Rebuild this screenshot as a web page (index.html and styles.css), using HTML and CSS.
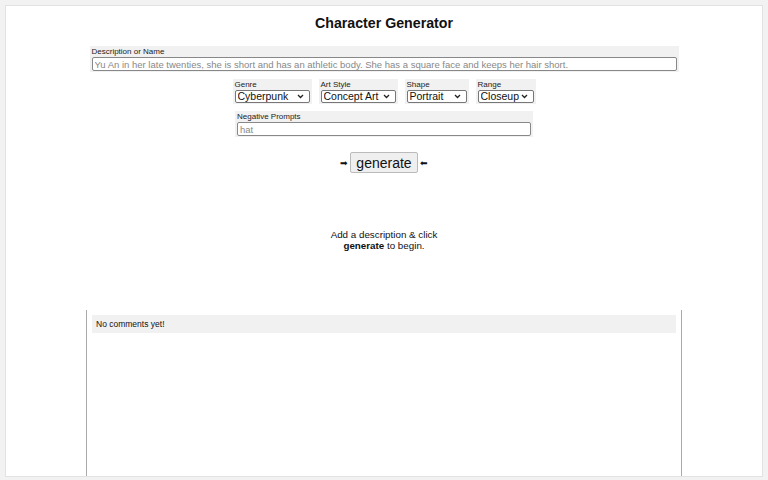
FILE: index.html
```html
<!DOCTYPE html>
<html lang="en">
<head>
  <meta charset="UTF-8">
  <meta name="viewport" content="width=device-width, initial-scale=1.0">
  <title>Character Generator</title>
  <link rel="stylesheet" href="styles.css">
</head>
<body>
  <div class="panel">
    <h1>Character Generator</h1>

    <div class="field field-wide">
      <label for="description">Description or Name</label>
      <input type="text" id="description" placeholder="Yu An in her late twenties, she is short and has an athletic body. She has a square face and keeps her hair short." />
    </div>

    <div class="options">
      <div class="field">
        <label for="genre">Genre</label>
        <select id="genre" class="sel-genre">
          <option>Cyberpunk</option>
        </select>
      </div>
      <div class="field">
        <label for="art-style">Art Style</label>
        <select id="art-style" class="sel-style">
          <option>Concept Art</option>
        </select>
      </div>
      <div class="field">
        <label for="shape">Shape</label>
        <select id="shape" class="sel-shape">
          <option>Portrait</option>
        </select>
      </div>
      <div class="field">
        <label for="range">Range</label>
        <select id="range" class="sel-range">
          <option>Closeup</option>
        </select>
      </div>
    </div>

    <div class="field field-negative">
      <label for="negative">Negative Prompts</label>
      <input type="text" id="negative" placeholder="hat" />
    </div>

    <div class="generate-row">
      <span class="arrow">&#10145;</span>
      <button id="generate-btn">generate</button>
      <span class="arrow">&#11013;</span>
    </div>

    <p class="hint">Add a description &amp; click<br><b>generate</b> to begin.</p>

    <div class="comments">
      <div class="comment-empty">No comments yet!</div>
    </div>
  </div>
</body>
</html>
```

FILE: styles.css
```css
html, body {
  margin: 0;
  height: 100%;
  overflow: hidden;
}
body {
  font-family: "Liberation Sans", Arial, sans-serif;
  background-color: #f2f2f2;
  color: #111;
}
.panel {
  margin: 5px 5px 0 5px;
  height: 472px;
  background-color: #fff;
  border: 1px solid #e2e2e2;
  box-sizing: border-box;
  display: flex;
  flex-direction: column;
  align-items: center;
}
h1 {
  font-size: 14.2px;
  margin: 8px 0 14px 0;
  line-height: 18px;
}
.field {
  background-color: #f1f1f1;
  padding: 1px 2px 1px 2px;
  display: flex;
  flex-direction: column;
}
.field label {
  font-size: 8px;
  line-height: 10px;
  color: #222;
}
.field input {
  font-family: inherit;
  font-size: 9.5px;
  height: 14px;
  padding: 0 2px;
  border: 1px solid #888;
  border-radius: 2px;
  box-sizing: border-box;
  outline: none;
}
.field input::placeholder {
  color: #888;
}
.field-wide {
  width: 589px;
  box-sizing: border-box;
}
.options {
  display: flex;
  gap: 7px;
  margin-top: 7px;
}
.field select {
  appearance: none;
  -webkit-appearance: none;
  font-family: inherit;
  font-size: 10.5px;
  line-height: 11px;
  height: 13px;
  padding: 0 0 0 2px;
  border: 1px solid #777;
  border-radius: 2px;
  background-color: #fff;
  background-image: url("data:image/svg+xml,%3Csvg xmlns='http://www.w3.org/2000/svg' width='7' height='5' viewBox='0 0 7 5'%3E%3Cpath d='M1 1l2.5 2.5L6 1' fill='none' stroke='%23222' stroke-width='1.3'/%3E%3C/svg%3E");
  background-repeat: no-repeat;
  background-position: right 5px center;
  color: #111;
}
.sel-genre { width: 75px; }
.sel-style { width: 75px; }
.sel-shape { width: 60px; }
.sel-range { width: 56px; }
.field-negative {
  width: 298px;
  box-sizing: border-box;
  margin-top: 7px;
}
.generate-row {
  display: flex;
  align-items: center;
  gap: 2px;
  margin-top: 15px;
}
.arrow {
  font-size: 9px;
  color: #111;
}
button {
  font-family: inherit;
  font-size: 14px;
  height: 21px;
  padding: 0 5px;
  background-color: #efefef;
  border: 1px solid #bbb;
  border-radius: 2px;
  color: #111;
}
.hint {
  font-size: 9.8px;
  line-height: 11px;
  text-align: center;
  margin: 56px 0 0 0;
}
.comments {
  margin-top: 59px;
  width: 596px;
  flex: 1;
  border-left: 1px solid #aaa;
  border-right: 1px solid #aaa;
  box-sizing: border-box;
  padding: 5px 5px;
}
.comment-empty {
  background-color: #f1f1f1;
  font-size: 8.5px;
  line-height: 18px;
  padding: 0 4px;
}
```
